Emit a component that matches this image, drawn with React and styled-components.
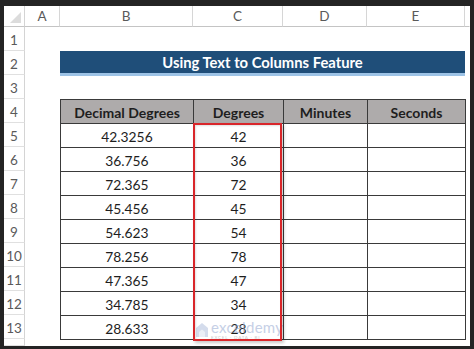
import React from "react";
import styled, { createGlobalStyle } from "styled-components";

const GlobalStyle = createGlobalStyle`
  html, body { margin: 0; padding: 0; background: #242424; }
  * { box-sizing: border-box; }
`;

const FONT = `"Lato", "Open Sans", "Liberation Sans", sans-serif`;

const Frame = styled.div`
  width: 474px;
  height: 349px;
  padding: 6px 4px 3px 4px;
  background: #242424;
`;

const Sheet = styled.div`
  position: relative;
  height: 100%;
  background: #ffffff;
  overflow: hidden;
  display: grid;
  grid-template-columns: 21px 35px 133px 90px 84px 98px 1fr;
  grid-template-rows: 21px repeat(13, 24px) 1fr;
  font-family: ${FONT};
`;

const Corner = styled.div`
  grid-column: 1;
  grid-row: 1;
  position: relative;
  border-right: 1px solid #d4d4d4;
  border-bottom: 1px solid #c4c4c4;
  &::after {
    content: "";
    position: absolute;
    right: 3px;
    bottom: 3px;
    width: 11px;
    height: 11px;
    background: #dcdcdc;
    clip-path: polygon(100% 0, 100% 100%, 0 100%);
  }
`;

const ColHead = styled.div`
  grid-row: 1;
  display: flex;
  align-items: center;
  justify-content: center;
  color: #5a5a5a;
  font-size: 13.5px;
  border-right: 1px solid ${(p) => (p.$last ? "transparent" : "#d6d6d6")};
  border-bottom: 1px solid #c4c4c4;
`;

const RowHead = styled.div`
  grid-column: 1;
  display: flex;
  align-items: center;
  justify-content: center;
  color: #5a5a5a;
  font-size: 13.5px;
  padding-top: 2px;
  border-right: 1px solid #d4d4d4;
  border-bottom: 1px solid #e0e0e0;
`;

const Title = styled.div`
  grid-column: 3 / 7;
  grid-row: 3;
  align-self: start;
  height: 25px;
  background: #1f4e79;
  border-bottom: 3px solid #9dc3e6;
  display: flex;
  align-items: center;
  justify-content: center;
  color: #ffffff;
  font-weight: 700;
  font-size: 14.8px;
`;

const Table = styled.div`
  grid-column: 3 / 7;
  grid-row: 5 / 15;
  position: relative;
  width: 406px;
  height: 241px;
  padding: 1px;
  gap: 1px;
  background: #3a3a3a;
  display: grid;
  grid-template-columns: 132px 89px 83px 97px;
  grid-template-rows: repeat(10, 23px);
`;

const Cell = styled.div`
  display: flex;
  align-items: center;
  justify-content: center;
  padding-top: 1px;
  background: ${(p) => (p.$head ? "#aeabab" : "#ffffff")};
  color: #1e1e1e;
  font-weight: ${(p) => (p.$head ? 700 : 400)};
  font-size: ${(p) => (p.$head ? "14px" : "13.8px")};
  position: relative;
  z-index: 1;
`;

const Highlight = styled.div`
  position: absolute;
  left: 133px;
  top: 24px;
  width: 89px;
  height: 218px;
  border: 2px solid #d9262a;
  box-shadow: 2px 2px 3px rgba(0, 0, 0, 0.22), inset 1px 1px 2px rgba(0, 0, 0, 0.12);
  z-index: 3;
  pointer-events: none;
`;

const Watermark = styled.div`
  position: absolute;
  left: 135px;
  top: 221px;
  display: flex;
  align-items: center;
  gap: 2px;
  z-index: 2;
  opacity: 0.6;
  pointer-events: none;
`;

const WmText = styled.div`
  display: flex;
  flex-direction: column;
  line-height: 1;
`;

const WmWord = styled.span`
  font-family: ${FONT};
  font-size: 15px;
  color: #9fb1d6;
  letter-spacing: 0.3px;
`;

const WmSub = styled.span`
  font-family: ${FONT};
  font-size: 4.5px;
  color: #a8a8a8;
  letter-spacing: 0.8px;
  margin-top: 1px;
`;

const Value = styled.span`
  position: relative;
  z-index: 4;
`;

const rows = [
  ["42.3256", "42"],
  ["36.756", "36"],
  ["72.365", "72"],
  ["45.456", "45"],
  ["54.623", "54"],
  ["78.256", "78"],
  ["47.365", "47"],
  ["34.785", "34"],
  ["28.633", "28"],
];

const letters = ["A", "B", "C", "D", "E", ""];

export default function App() {
  return (
    <>
      <GlobalStyle />
      <Frame>
        <Sheet>
          <Corner />
          {letters.map((l, i) => (
            <ColHead key={i} style={{ gridColumn: i + 2 }} $last={i === 5}>
              {l}
            </ColHead>
          ))}
          {Array.from({ length: 14 }, (_, i) => (
            <RowHead key={i} style={{ gridRow: i + 2 }}>
              {i < 13 ? i + 1 : ""}
            </RowHead>
          ))}
          <Title>Using Text to Columns Feature</Title>
          <Table>
            <Cell $head>Decimal Degrees</Cell>
            <Cell $head>Degrees</Cell>
            <Cell $head>Minutes</Cell>
            <Cell $head>Seconds</Cell>
            {rows.map(([dec, deg]) => (
              <React.Fragment key={dec}>
                <Cell>{dec}</Cell>
                <Cell>
                  <Value>{deg}</Value>
                </Cell>
                <Cell />
                <Cell />
              </React.Fragment>
            ))}
            <Watermark>
              <svg width="14" height="16" viewBox="0 0 14 16">
                <path d="M7 1 L13 6 L13 15 L1 15 L1 6 Z" fill="#b9c6e0" />
                <path d="M4 10 L7 7.5 L10 10 L10 15 L4 15 Z" fill="#dde4f1" />
              </svg>
              <WmText>
                <WmWord>exceldemy</WmWord>
                <WmSub>EXCEL · DATA · BI</WmSub>
              </WmText>
            </Watermark>
            <Highlight />
          </Table>
        </Sheet>
      </Frame>
    </>
  );
}
